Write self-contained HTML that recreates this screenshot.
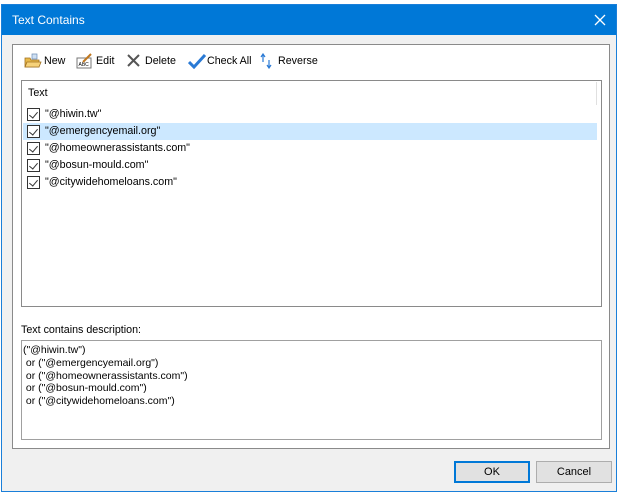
<!DOCTYPE html>
<html><head><style>
*{margin:0;padding:0;box-sizing:border-box}
body{width:621px;height:493px;background:#fff;font-family:"Liberation Sans",sans-serif;font-size:11px;color:#000;position:relative;overflow:hidden}
.win{position:absolute;left:1px;top:4px;width:616px;height:488px;background:#f0f0f0;border:1px solid #1a7fd9}
.title{position:absolute;left:0;top:0;width:100%;height:30px;background:#0078d7;color:#fff;font-size:12px;line-height:30px;padding-left:10px}
.close{position:absolute;right:10px;top:9px}
.panel{position:absolute;left:10px;top:39px;width:598px;height:405px;background:#fff;border:1px solid #8a8a8a}
.tb{position:absolute;top:8px;height:16px;line-height:16px;font-size:10.7px}
.ic{position:absolute;top:8px}
.list{position:absolute;left:8px;top:35px;width:581px;height:227px;border:1px solid #8a8a8a;background:#fff;font-size:10.7px}
.row{position:absolute;left:1px;width:574px;height:17px;line-height:17px;padding-left:22px}
.cb{position:absolute;left:4px;top:2px;width:13px;height:13px;border:1px solid #333;background:#fff}
.desc{position:absolute;left:8px;top:295px;width:581px;height:100px;border:1px solid #a0a0a0;background:#fff;padding:3px 1px;line-height:12.8px;font-size:10.5px}
.btn{position:absolute;top:456px;height:22px;width:76px;background:#e1e1e1;border:1px solid #adadad;text-align:center;line-height:20px;font-size:11px}
</style></head><body>
<div class="win">
<div class="title">Text Contains
<svg class="close" width="12" height="12" viewBox="0 0 12 12"><path d="M1 1L11 11M11 1L1 11" stroke="#fff" stroke-width="1.3"/></svg></div>
<div class="panel">
<svg class="ic" style="left:11px" width="18" height="16" viewBox="0 0 18 16"><path d="M1 5h5l1 2h8v7H1z" fill="#e8b94a" stroke="#a07020" stroke-width=".8"/><path d="M3 9h14l-2 5H1z" fill="#f6d27a" stroke="#a07020" stroke-width=".8"/><path d="M8 1h5v5H8z" fill="#cfe0f3" stroke="#6d8db5" stroke-width=".7"/></svg>
<div class="tb" style="left:31px">New</div>
<svg class="ic" style="left:63px" width="17" height="16" viewBox="0 0 17 16"><rect x="1" y="5" width="14" height="10" fill="#fff" stroke="#777"/><text x="2.5" y="13" font-size="5" font-family="Liberation Sans">ABC</text><path d="M7 9L15 1" stroke="#c07820" stroke-width="2"/></svg>
<div class="tb" style="left:83px">Edit</div>
<svg class="ic" style="left:113px" width="15" height="15" viewBox="0 0 15 15"><path d="M2 2L13 13M13 2L2 13" stroke="#555" stroke-width="2"/></svg>
<div class="tb" style="left:132px">Delete</div>
<svg class="ic" style="left:175px" width="18" height="16" viewBox="0 0 18 16"><path d="M1 9L6 14L17 2" fill="none" stroke="#2a7ad5" stroke-width="3"/></svg>
<div class="tb" style="left:194px">Check All</div>
<svg class="ic" style="left:247px" width="13" height="16" viewBox="0 0 13 16"><path d="M3 9V2M1 4L3 1L5 4M9 7v7M7 12l2 3l2-3" fill="none" stroke="#2a7ad5" stroke-width="1.2"/></svg>
<div class="tb" style="left:265px">Reverse</div>
<div class="list">
<div style="position:absolute;left:6px;top:6px">Text</div>
<div style="position:absolute;left:574px;top:1px;width:1px;height:23px;background:#e0e0e0"></div>
<div class="row" style="top:25px"><div class="cb"></div>"@hiwin.tw"</div>
<div class="row" style="top:42px;background:#cce8ff"><div class="cb"></div>"@emergencyemail.org"</div>
<div class="row" style="top:59px"><div class="cb"></div>"@homeownerassistants.com"</div>
<div class="row" style="top:76px"><div class="cb"></div>"@bosun-mould.com"</div>
<div class="row" style="top:93px"><div class="cb"></div>"@citywidehomeloans.com"</div>
</div>
<div style="position:absolute;left:8px;top:279px;font-size:10.7px">Text contains description:</div>
<div class="desc">("@hiwin.tw")<br>&nbsp;or ("@emergencyemail.org")<br>&nbsp;or ("@homeownerassistants.com")<br>&nbsp;or ("@bosun-mould.com")<br>&nbsp;or ("@citywidehomeloans.com")</div>
</div>
<div class="btn" style="left:452px;border:2px solid #0078d7;line-height:18px">OK</div>
<div class="btn" style="left:534px">Cancel</div>
</div>
<style>.cb::after{content:"";position:absolute;left:3px;top:1px;width:4px;height:7px;border:solid #333;border-width:0 1px 1px 0;transform:rotate(40deg)}</style>
</body></html>
